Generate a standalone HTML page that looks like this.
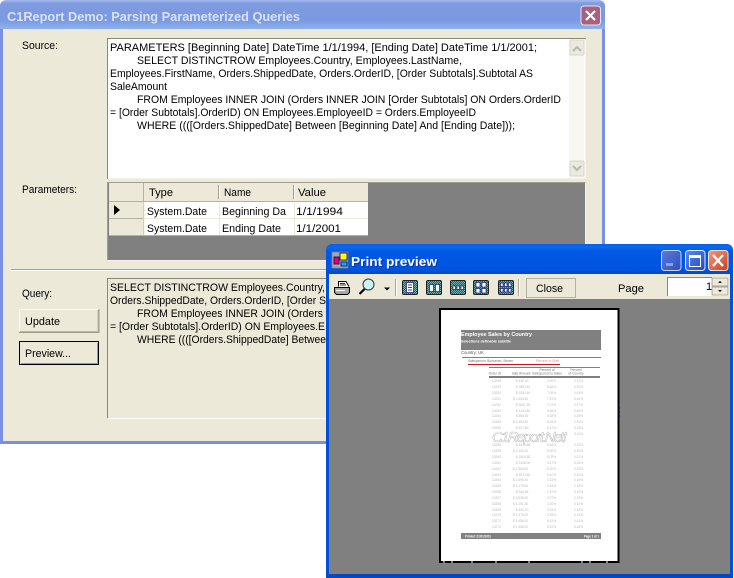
<!DOCTYPE html>
<html><head><meta charset="utf-8"><style>
html,body{margin:0;padding:0;background:#fff;width:734px;height:578px;overflow:hidden}
svg{display:block}
text{font-family:"Liberation Sans",sans-serif;white-space:pre}
.t{font-size:11px;fill:#000}
</style></head><body>
<svg width="734" height="578" viewBox="0 0 734 578" xmlns="http://www.w3.org/2000/svg">
<defs>
<linearGradient id="a" x1="0" y1="0" x2="0" y2="1"><stop offset="0" stop-color="#a4baf0"/><stop offset=".12" stop-color="#7f9be0"/><stop offset=".7" stop-color="#7a99e2"/><stop offset="1" stop-color="#8fb2ec"/></linearGradient>
<linearGradient id="b" x1="0" y1="0" x2="0" y2="1"><stop offset="0" stop-color="#0a5fe0"/><stop offset=".1" stop-color="#0a6af0"/><stop offset=".25" stop-color="#0058e4"/><stop offset=".85" stop-color="#0054e0"/><stop offset="1" stop-color="#0348c4"/></linearGradient>
<linearGradient id="c" x1="0" y1="0" x2="1" y2="1"><stop offset="0" stop-color="#f09a80"/><stop offset="1" stop-color="#c8401c"/></linearGradient>
<linearGradient id="d" x1="0" y1="0" x2="1" y2="1"><stop offset="0" stop-color="#5c8cf0"/><stop offset="1" stop-color="#1c48c8"/></linearGradient>
<linearGradient id="e" x1="0" y1="0" x2="1" y2="1"><stop offset="0" stop-color="#5c7ad8"/><stop offset="1" stop-color="#2c50c0"/></linearGradient>
<pattern id="h" width="2" height="2" patternUnits="userSpaceOnUse"><rect width="2" height="2" fill="#2a5c5c"/><rect width="1" height="1" fill="#6fb0b0"/><rect x="1" y="1" width="1" height="1" fill="#6fb0b0"/></pattern>
</defs>

<!-- main window -->
<path d="M0 444V7Q0 0 7 0H598Q605 0 605 7V444Z" fill="#7b8fe2"/>
<path d="M0 29V7Q0 0 7 0H598Q605 0 605 7V29Z" fill="url(#a)"/>
<rect x="3" y="29" width="599" height="412" fill="#ece9d8"/>
<text x="7" y="21" font-size="13" font-weight="bold" fill="#d8e2f8" textLength="293" lengthAdjust="spacingAndGlyphs">C1Report Demo: Parsing Parameterized Queries</text>
<rect x="581" y="6" width="19.500" height="19" rx="3" fill="#a8607c" stroke="#dfe4f6"/>
<path d="M586 11l9 9m0-9l-9 9" stroke="#fff" stroke-width="2.200"/>

<text class="t" x="22" y="49" textLength="36" lengthAdjust="spacingAndGlyphs">Source:</text>
<rect x="107.500" y="38.500" width="478" height="140" fill="#fff" stroke="#8a8878"/>
<path d="M108 178.500H585.500V39" fill="none" stroke="#f6f4ea"/>
<rect x="569" y="40" width="15" height="138" fill="#f8f7f2"/>
<rect x="570" y="40" width="14" height="15" rx="1" fill="#ece9de" stroke="#d9d7cc"/>
<rect x="570" y="161" width="14" height="15" rx="1" fill="#ece9de" stroke="#d9d7cc"/>
<path d="M573 51l4-4 4 4" fill="none" stroke="#b8b8ac" stroke-width="2"/>
<path d="M573 166l4 4 4-4" fill="none" stroke="#b8b8ac" stroke-width="2"/>
<text class="t" x="110" y="51" textLength="427" lengthAdjust="spacingAndGlyphs">PARAMETERS [Beginning Date] DateTime 1/1/1994, [Ending Date] DateTime 1/1/2001;</text>
<text class="t" x="137" y="64" textLength="325" lengthAdjust="spacingAndGlyphs">SELECT DISTINCTROW Employees.Country, Employees.LastName,</text>
<text class="t" x="110" y="77" textLength="423" lengthAdjust="spacingAndGlyphs">Employees.FirstName, Orders.ShippedDate, Orders.OrderID, [Order Subtotals].Subtotal AS</text>
<text class="t" x="110" y="90" textLength="57" lengthAdjust="spacingAndGlyphs">SaleAmount</text>
<text class="t" x="137" y="103" textLength="424" lengthAdjust="spacingAndGlyphs">FROM Employees INNER JOIN (Orders INNER JOIN [Order Subtotals] ON Orders.OrderID</text>
<text class="t" x="110" y="116" textLength="366" lengthAdjust="spacingAndGlyphs">= [Order Subtotals].OrderID) ON Employees.EmployeeID = Orders.EmployeeID</text>
<text class="t" x="137" y="129" textLength="378" lengthAdjust="spacingAndGlyphs">WHERE ((([Orders.ShippedDate] Between [Beginning Date] And [Ending Date]));</text>

<text class="t" x="22" y="193" textLength="55" lengthAdjust="spacingAndGlyphs">Parameters:</text>
<rect x="108" y="182" width="477" height="78" fill="#808080"/>
<path d="M107.500 260V182.500H585.500" fill="none" stroke="#a09e8e"/>
<path d="M108 260.500H585.500V183" fill="none" stroke="#f6f4ea"/>
<rect x="109" y="183" width="259" height="18" fill="#ece9d8"/>
<rect x="109" y="202" width="34" height="33" fill="#ece9d8"/>
<rect x="144" y="202" width="224" height="33" fill="#fff"/>
<path d="M143.500 183V236M109 201.500H368M109 218.500H143M109 235.500H368" stroke="#b4b2a2" fill="none"/>
<path d="M144 202V235M219.500 202V235M294.500 202V235M144 218.500H368" stroke="#ece9d8" fill="none"/>
<path d="M218.500 185V199M293.500 185V199" stroke="#a09e92" fill="none"/>
<path d="M219.500 185V199M294.500 185V199" stroke="#fff" fill="none"/>
<path d="M114 205l6 5-6 5z" fill="#000"/>
<text class="t" x="149" y="196" textLength="24" lengthAdjust="spacingAndGlyphs">Type</text>
<text class="t" x="224" y="196" textLength="27" lengthAdjust="spacingAndGlyphs">Name</text>
<text class="t" x="298" y="196" textLength="28" lengthAdjust="spacingAndGlyphs">Value</text>
<text class="t" x="147" y="215" textLength="60" lengthAdjust="spacingAndGlyphs">System.Date</text>
<text class="t" x="222" y="215" textLength="64" lengthAdjust="spacingAndGlyphs">Beginning Da</text>
<text class="t" x="296" y="215" textLength="47" lengthAdjust="spacingAndGlyphs">1/1/1994</text>
<text class="t" x="147" y="232" textLength="60" lengthAdjust="spacingAndGlyphs">System.Date</text>
<text class="t" x="222" y="232" textLength="59" lengthAdjust="spacingAndGlyphs">Ending Date</text>
<text class="t" x="296" y="232" textLength="45" lengthAdjust="spacingAndGlyphs">1/1/2001</text>

<path d="M11 269.500H602" stroke="#a5a392"/>
<path d="M11 270.500H602" stroke="#fff"/>

<text class="t" x="22" y="297" textLength="30" lengthAdjust="spacingAndGlyphs">Query:</text>
<rect x="19.500" y="309.500" width="79" height="22" fill="#ece9d8" stroke="#fff"/>
<path d="M19 332.500H99V309" fill="none" stroke="#9d9b8b" stroke-width="1"/>
<path d="M20 331.500H98V310" fill="none" stroke="#b8b6a6"/>
<text class="t" x="25" y="325" textLength="35" lengthAdjust="spacingAndGlyphs">Update</text>
<rect x="19.500" y="341.500" width="79" height="23" fill="#ece9d8" stroke="#000"/>
<path d="M21 363.500H97.500V343" fill="none" stroke="#9d9b8b"/>
<text class="t" x="25" y="357" textLength="46" lengthAdjust="spacingAndGlyphs">Preview...</text>
<path d="M107.500 418V278.500H340" fill="none" stroke="#8a8878"/>
<path d="M108 418.500H340" stroke="#fff"/>
<text class="t" x="110" y="291" textLength="215" lengthAdjust="spacingAndGlyphs">SELECT DISTINCTROW Employees.Country,</text>
<text class="t" x="110" y="304" textLength="216" lengthAdjust="spacingAndGlyphs">Orders.ShippedDate, Orders.OrderID, [Order S</text>
<text class="t" x="137" y="317" textLength="186" lengthAdjust="spacingAndGlyphs">FROM Employees INNER JOIN (Orders</text>
<text class="t" x="110" y="330" textLength="215" lengthAdjust="spacingAndGlyphs">= [Order Subtotals].OrderID) ON Employees.E</text>
<text class="t" x="137" y="343" textLength="189" lengthAdjust="spacingAndGlyphs">WHERE ((([Orders.ShippedDate] Betwee</text>

<!-- preview window -->
<path d="M326 578V251Q326 244 333 244H726Q733 244 733 251V578Z" fill="#0050dc"/>
<path d="M326 274V251Q326 244 333 244H726Q733 244 733 251V274Z" fill="url(#b)"/>
<rect x="329" y="274" width="401" height="300" fill="#808080"/>
<rect x="329" y="274" width="401" height="25" fill="#ece9d8"/>
<rect x="326" y="574" width="407" height="4" fill="#0348c4"/>
<rect x="332" y="252" width="16" height="16" fill="#a8a8a8" stroke="#808080" stroke-width=".8"/>
<rect x="340" y="253" width="7" height="7" fill="#ffff00" stroke="#000080" stroke-width=".8"/>
<rect x="334" y="257" width="5" height="7" fill="#e8006c" stroke="#000080" stroke-width=".8"/>
<rect x="341" y="262" width="6" height="4" fill="#00b8e8" stroke="#000080" stroke-width=".8"/>
<text x="351" y="266" font-size="13" font-weight="bold" fill="#0a2a8c" textLength="86" lengthAdjust="spacingAndGlyphs" opacity=".7" transform="translate(1 1)">Print preview</text>
<text x="351" y="266" font-size="13" font-weight="bold" fill="#fff" textLength="86" lengthAdjust="spacingAndGlyphs">Print preview</text>
<rect x="661.500" y="250.500" width="19.500" height="20" rx="3" fill="url(#e)" stroke="#c8d4f4"/>
<rect x="666" y="263" width="7" height="3" fill="#8aa0e4"/>
<rect x="685.500" y="250.500" width="19.500" height="20" rx="3" fill="url(#d)" stroke="#e4ecfc"/>
<rect x="689.500" y="255.500" width="11" height="11" fill="none" stroke="#fff"/>
<rect x="689" y="255" width="12" height="3" fill="#fff"/>
<rect x="708.500" y="250.500" width="19.500" height="20" rx="3" fill="url(#c)" stroke="#f4e4dc"/>
<path d="M713 255l10 11m0-11l-10 11" stroke="#fff" stroke-width="2.400"/>

<!-- toolbar icons -->
<g fill="none" stroke="#000">
<path d="M338.500 286.500V281.500H346L349 286.500" fill="#fff"/>
<path d="M334.500 287.500H349.500V292.500L347.500 294.500H336.500L334.500 292.500Z" fill="#a8a8a0"/>
<path d="M336 290.500H345" stroke="#fff"/>
<path d="M340 283.500H345M340 285H346" stroke="#333"/>
<circle cx="368.500" cy="284.500" r="5.500" fill="#c8f4f4" stroke="#333"/>
<path d="M364.500 289L359.500 294" stroke-width="2.200"/>
</g>
<path d="M384 287.500h6l-3 3z" fill="#000"/>
<path d="M395.500 279V296" stroke="#a8a698"/><path d="M396.500 279V296" stroke="#fff"/>
<g stroke="#222">
<rect x="402.500" y="280.500" width="15" height="14" rx="1.500" fill="url(#h)"/>
<rect x="426.500" y="280.500" width="15" height="14" rx="1.500" fill="url(#h)"/>
<rect x="450.500" y="280.500" width="15" height="14" rx="1.500" fill="url(#h)"/>
<rect x="473.500" y="280.500" width="15" height="14" rx="1.500" fill="url(#h)"/>
<rect x="498.500" y="280.500" width="15" height="14" rx="1.500" fill="url(#h)"/>
</g>
<g fill="#fff" stroke="#000060" stroke-width=".6">
<rect x="406.500" y="282.500" width="7" height="10"/>
<rect x="429.500" y="284.500" width="4" height="7"/><rect x="435.500" y="284.500" width="4" height="7"/>
<rect x="453" y="286" width="2.500" height="3.500"/><rect x="457" y="286" width="2.500" height="3.500"/><rect x="461" y="286" width="2.500" height="3.500"/>
<rect x="476" y="282.500" width="4" height="4.500"/><rect x="482" y="282.500" width="4" height="4.500"/><rect x="476" y="288.500" width="4" height="4.500"/><rect x="482" y="288.500" width="4" height="4.500"/>
<rect x="500.500" y="283" width="2.500" height="3.500"/><rect x="504.500" y="283" width="2.500" height="3.500"/><rect x="508.500" y="283" width="2.500" height="3.500"/>
<rect x="500.500" y="288.500" width="2.500" height="3.500"/><rect x="504.500" y="288.500" width="2.500" height="3.500"/><rect x="508.500" y="288.500" width="2.500" height="3.500"/>
</g>
<path d="M408 285h4M408 287.500h4M408 290h4" stroke="#000060" stroke-width=".7"/>
<path d="M518.500 279V296" stroke="#a8a698"/><path d="M519.500 279V296" stroke="#fff"/>
<rect x="526.500" y="278.500" width="49" height="19" fill="#ece9d8" stroke="#b5b3a0"/>
<text class="t" x="536" y="292" textLength="27" lengthAdjust="spacingAndGlyphs">Close</text>
<text class="t" x="618" y="292" textLength="26" lengthAdjust="spacingAndGlyphs">Page</text>
<rect x="667" y="277" width="62" height="19" fill="#fff"/>
<path d="M667.500 296V277.500H712" fill="none" stroke="#8a8878"/>
<text class="t" x="706" y="290">1</text>
<rect x="712" y="278" width="16" height="8" fill="#ece9d8" stroke="#8a8878" stroke-width=".7"/>
<rect x="712" y="287" width="16" height="8" fill="#ece9d8" stroke="#8a8878" stroke-width=".7"/>
<path d="M718 283h4l-2-2z" fill="#000"/>
<path d="M718 290h4l-2 2z" fill="#000"/>

<!-- report page -->
<rect x="440" y="309" width="178.500" height="253" fill="#fff" stroke="#000" stroke-width="2"/>
<path d="M618 408h2M618 412h2M618 416h2" stroke="#000060"/>
<path d="M444 561v2M452 561v2M472 561v2M496 561v2M529 561v2M582 561v2M590 561v2M607 561v2" stroke="#fff"/>
<rect x="461" y="330" width="140" height="20" fill="#808080"/>
<text x="461" y="336" font-size="5.500" font-weight="bold" fill="#fff" textLength="71" lengthAdjust="spacingAndGlyphs">Employee Sales by Country</text>
<text x="461" y="342.500" font-size="3.800" font-weight="bold" fill="#fff" textLength="50" lengthAdjust="spacingAndGlyphs">Selections definable subtitle</text>
<text x="461" y="354" font-size="4.500" fill="#555" textLength="23" lengthAdjust="spacingAndGlyphs">Country: UK</text>
<rect x="462" y="357" width="139" height="1" fill="#808080"/>
<text x="468" y="362" font-size="3.500" fill="#777" textLength="45" lengthAdjust="spacingAndGlyphs">Salesperson: Buchanan, Steven</text>
<text x="536" y="362" font-size="3.500" fill="#f09090" textLength="23" lengthAdjust="spacingAndGlyphs">Percent of Staff</text>
<rect x="468" y="364" width="92" height="1" fill="#c81818"/>
<rect x="489" y="367" width="111" height="1" fill="#808080"/>
<g font-size="3.300" fill="#777" text-anchor="middle">
<text x="547" y="371">Percent of</text><text x="547" y="374.500">Salesperson's Sales</text>
<text x="576" y="371">Percent</text><text x="576" y="374.500">of Country</text>
<text x="495" y="374.500">Order ID</text><text x="521" y="374.500">Sale Amount</text>
</g>
<rect x="489" y="376" width="111" height="2" fill="#808080"/>
<g font-size="3.200" fill="#b8b8b8">
<text x="492" y="382">10248</text><text x="516" y="382">$ 440.00</text><text x="547" y="382">2.00%</text><text x="574" y="382">0.12%</text>
<text x="492" y="388">10249</text><text x="516" y="388">$ 1863.40</text><text x="547" y="388">8.46%</text><text x="574" y="388">0.52%</text>
<text x="492" y="394">10250</text><text x="516" y="394">$ 1552.60</text><text x="547" y="394">7.05%</text><text x="574" y="394">0.43%</text>
<text x="492" y="400">10251</text><text x="513" y="400">$ 1,654.60</text><text x="547" y="400">7.51%</text><text x="574" y="400">0.46%</text>
<text x="492" y="406">10252</text><text x="516" y="406">$ 3597.90</text><text x="547" y="406">2.72%</text><text x="574" y="406">0.17%</text>
<text x="492" y="412">10253</text><text x="516" y="412">$ 1444.80</text><text x="547" y="412">6.56%</text><text x="574" y="412">0.40%</text>
<text x="492" y="417">10254</text><text x="516" y="417">$ 556.62</text><text x="547" y="417">5.52%</text><text x="574" y="417">0.34%</text>
<text x="492" y="423">10255</text><text x="513" y="423">$ 2,490.50</text><text x="547" y="423">5.10%</text><text x="574" y="423">0.31%</text>
<text x="492" y="429">10256</text><text x="516" y="429">$ 517.80</text><text x="547" y="429">5.37%</text><text x="574" y="429">0.33%</text>
<text x="574" y="435">0.31%</text>
<text x="492" y="446">10258</text><text x="516" y="446">$ 1614.88</text><text x="547" y="446">5.34%</text><text x="574" y="446">0.33%</text>
<text x="492" y="452">10259</text><text x="513" y="452">$ 1,100.20</text><text x="547" y="452">5.00%</text><text x="574" y="452">0.31%</text>
<text x="492" y="458">10260</text><text x="516" y="458">$ 1504.65</text><text x="547" y="458">5.02%</text><text x="574" y="458">0.31%</text>
<text x="492" y="464">10261</text><text x="516" y="464">$ 1448.00</text><text x="547" y="464">5.47%</text><text x="574" y="464">0.34%</text>
<text x="492" y="470">10262</text><text x="513" y="470">$ 1,584.00</text><text x="547" y="470">5.20%</text><text x="574" y="470">0.32%</text>
<text x="492" y="476">10263</text><text x="516" y="476">$ 1873.80</text><text x="547" y="476">5.10%</text><text x="574" y="476">0.31%</text>
<text x="492" y="481">10264</text><text x="513" y="481">$ 2,695.50</text><text x="547" y="481">2.51%</text><text x="574" y="481">0.16%</text>
<text x="492" y="487">10265</text><text x="513" y="487">$ 1,176.00</text><text x="547" y="487">2.45%</text><text x="574" y="487">0.15%</text>
<text x="492" y="493">10266</text><text x="516" y="493">$ 346.56</text><text x="547" y="493">1.57%</text><text x="574" y="493">0.10%</text>
<text x="492" y="499">10267</text><text x="513" y="499">$ 3,536.60</text><text x="547" y="499">2.07%</text><text x="574" y="499">0.13%</text>
<text x="492" y="505">10268</text><text x="513" y="505">$ 1,101.20</text><text x="547" y="505">2.00%</text><text x="574" y="505">0.12%</text>
<text x="492" y="511">10269</text><text x="516" y="511">$ 642.20</text><text x="547" y="511">2.91%</text><text x="574" y="511">0.18%</text>
<text x="492" y="516">10270</text><text x="513" y="516">$ 1,376.00</text><text x="547" y="516">2.25%</text><text x="574" y="516">0.14%</text>
<text x="492" y="522">10271</text><text x="513" y="522">$ 1,456.00</text><text x="547" y="522">6.61%</text><text x="574" y="522">0.41%</text>
<text x="492" y="528">10272</text><text x="513" y="528">$ 1,456.00</text><text x="547" y="528">5.61%</text><text x="574" y="528">0.35%</text>
</g>
<text x="492" y="442" font-size="15" font-style="italic" fill="#fff" stroke="#a0a0a0" stroke-width=".35" textLength="75" lengthAdjust="spacing">C1Report.Net!</text>
<rect x="461" y="533" width="140" height="6" fill="#808080"/>
<text x="465" y="537.500" font-size="3.800" font-weight="bold" fill="#fff" textLength="26" lengthAdjust="spacingAndGlyphs">Printed: 01/01/2001</text>
<text x="584" y="537.500" font-size="3.800" font-weight="bold" fill="#fff" textLength="15" lengthAdjust="spacingAndGlyphs">Page 1 of 1</text>
</svg>
</body></html>
